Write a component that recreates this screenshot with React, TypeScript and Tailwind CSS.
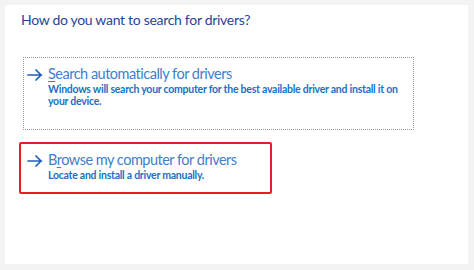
function Arrow() {
  return (
    <svg width="16" height="12" viewBox="0 0 16 12" className="mt-[5px] shrink-0" fill="none">
      <path d="M1 6h13.5M9 1l5 5-5 5" stroke="#1f5fb8" strokeWidth="1.7" strokeLinecap="round" strokeLinejoin="round" />
    </svg>
  );
}

function Option({
  title,
  accessKey,
  rest,
  desc,
}: {
  title: string;
  accessKey: string;
  rest: string;
  desc: React.ReactNode;
}) {
  return (
    <div className="flex items-start gap-[5px]">
      <Arrow />
      <div>
        <p className="whitespace-nowrap text-[14.5px] tracking-[-0.5px] leading-[19px] text-[#3d7fcb]">
          {title}
          <span className="underline underline-offset-2 decoration-1">{accessKey}</span>
          {rest}
        </p>
        <p className="whitespace-nowrap text-[10.5px] tracking-[-0.25px] font-bold leading-[12px] text-[#1b6fc6]">
          {desc}
        </p>
      </div>
    </div>
  );
}

export default function App() {
  return (
    <div
      className="w-[474px] h-[270px] bg-[#f3f3f3] pt-[5px] pl-[5px]"
      style={{ fontFamily: 'Lato, "Noto Sans", sans-serif' }}
    >
      <div className="w-[463px] h-[259px] bg-white pl-[16px] pt-[6px]">
        <h1 className="whitespace-nowrap text-[14px] tracking-[-0.3px] leading-[18px] text-[#27449a]">
          How do you want to search for drivers?
        </h1>

        <div className="mt-[28px] ml-[2px] w-[391px] h-[73px] border border-dotted border-[#9a9a9a] pl-[3px] pt-[6px]">
          <Option
            title=""
            accessKey="S"
            rest="earch automatically for drivers"
            desc={
              <>
                Windows will search your computer for the best available driver and install it on
                <br />
                your device.
              </>
            }
          />
        </div>

        <div className="mt-[12px] ml-[-2px] w-[253px] h-[52px] border-2 border-[#e81c24] rounded-[2px] pl-[6px] pt-[6px]">
          <Option
            title="B"
            accessKey="r"
            rest="owse my computer for drivers"
            desc="Locate and install a driver manually."
          />
        </div>
      </div>
    </div>
  );
}
